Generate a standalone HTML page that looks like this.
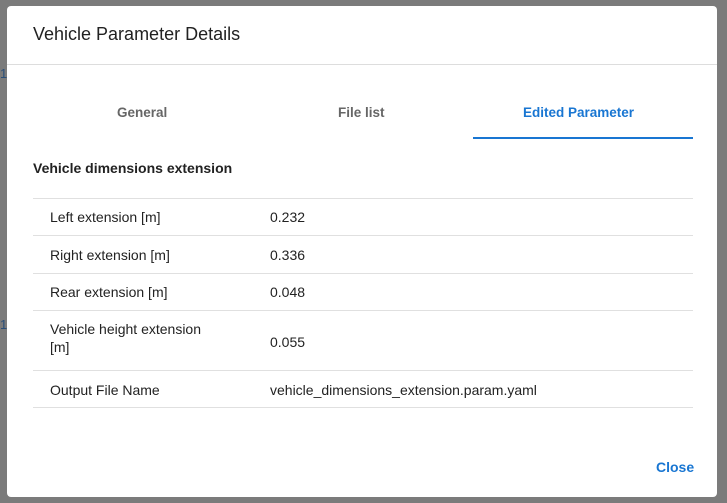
<!DOCTYPE html>
<html><head><style>
body{margin:0;width:727px;height:503px;background:#7b7b7b;position:relative;overflow:hidden;font-family:"Liberation Sans",sans-serif;}
.dlg{position:absolute;left:7px;top:6px;width:710px;height:491px;background:#fff;border-radius:4px;}
.t{position:absolute;white-space:nowrap;}
.hl{position:absolute;height:1px;background:#e0e0e0;}
.r{font-size:14px;color:#222;}
</style></head><body>
<div class="t" style="left:0;top:66px;font-size:13px;color:#2a4f7a">1</div>
<div class="t" style="left:0;top:317px;font-size:13px;color:#2a4f7a">1</div>
<div class="dlg">
<div class="t" style="left:26px;top:18px;font-size:18px;color:#222">Vehicle Parameter Details</div>
<div class="hl" style="left:0;top:58px;width:710px;background:#ddd"></div>
<div class="t" style="left:110px;top:99px;font-size:13.5px;font-weight:bold;color:#666">General</div>
<div class="t" style="left:331px;top:99px;font-size:13.5px;font-weight:bold;color:#666">File list</div>
<div class="t" style="left:516px;top:99px;font-size:13.5px;font-weight:bold;color:#1976d2">Edited Parameter</div>
<div style="position:absolute;left:466px;top:131px;width:220px;height:2px;background:#1976d2"></div>
<div class="t" style="left:26px;top:154px;font-size:14px;font-weight:bold;color:#222">Vehicle dimensions extension</div>
<div class="hl" style="left:26px;top:192px;width:660px"></div>
<div class="t r" style="left:43px;top:203px">Left extension [m]</div>
<div class="t r" style="left:263px;top:203px">0.232</div>
<div class="hl" style="left:26px;top:229px;width:660px"></div>
<div class="t r" style="left:43px;top:241px">Right extension [m]</div>
<div class="t r" style="left:263px;top:241px">0.336</div>
<div class="hl" style="left:26px;top:267px;width:660px"></div>
<div class="t r" style="left:43px;top:278px">Rear extension [m]</div>
<div class="t r" style="left:263px;top:278px">0.048</div>
<div class="hl" style="left:26px;top:304px;width:660px"></div>
<div class="t r" style="left:43px;top:314px;line-height:18px">Vehicle height extension<br>[m]</div>
<div class="t r" style="left:263px;top:328px">0.055</div>
<div class="hl" style="left:26px;top:364px;width:660px"></div>
<div class="t r" style="left:43px;top:376px">Output File Name</div>
<div class="t r" style="left:263px;top:376px">vehicle_dimensions_extension.param.yaml</div>
<div class="hl" style="left:26px;top:401px;width:660px"></div>
<div class="t" style="left:649px;top:453px;font-size:14px;font-weight:bold;color:#1976d2">Close</div>
</div>
</body></html>
